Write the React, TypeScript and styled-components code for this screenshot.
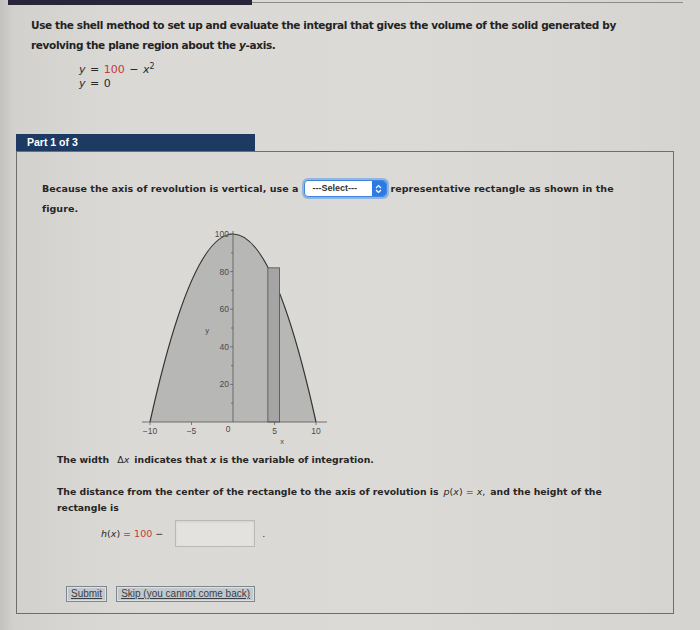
import React from "react";
import styled, { createGlobalStyle } from "styled-components";

const Global = createGlobalStyle`
  html, body { margin: 0; padding: 0; }
  body {
    width: 700px;
    height: 630px;
    overflow: hidden;
    background: #d8d6d2;
    font-family: "DejaVu Sans", Verdana, sans-serif;
  }
`;

const Page = styled.div`
  width: 700px;
  height: 630px;
  overflow: hidden;
  background: linear-gradient(90deg, #c4c2be 0px, #d3d1cd 14px, #dbd9d5 120px, #dcdad6 60%, #d6d4d0 100%);
`;

const TopRule = styled.div`
  display: flex;
  align-items: flex-start;
  height: 5px;
  padding-left: 8px;
`;

const TopTab = styled.div`
  width: 244px;
  height: 5px;
  background: #27253b;
`;

const TopLine = styled.div`
  width: 431px;
  margin-top: 2px;
  border-top: 1px solid #8d8b87;
`;

const Question = styled.div`
  margin: 10px 0 0 31px;
  font-size: 10.5px;
  font-weight: bold;
  line-height: 20px;
  letter-spacing: -0.37px;
  color: #232323;
  white-space: nowrap;
`;

const Equations = styled.div`
  margin: 8px 0 0 79px;
  font-size: 11px;
  line-height: 14px;
  color: #2a2a2a;
  word-spacing: 1px;
`;

const Var = styled.i`
  font-style: italic;
`;

const Sup = styled.sup`
  font-size: 8px;
  line-height: 0;
  vertical-align: 4px;
`;

const Red = styled.span`
  color: #c23b3b;
`;

const PartHeader = styled.div`
  margin: 43px 0 0 16px;
  width: 239px;
  height: 17px;
  box-sizing: border-box;
  padding-left: 11px;
  background: #1d3a62;
  color: #ffffff;
  font-family: "Liberation Sans", Arial, sans-serif;
  font-weight: bold;
  font-size: 10.5px;
  line-height: 17px;
`;

const Panel = styled.div`
  margin-left: 16px;
  width: 658px;
  height: 463px;
  box-sizing: border-box;
  border: 1px solid #6e6e6e;
  padding-top: 27px;
  color: #262626;
`;

const Sentence = styled.div`
  padding-left: 25px;
  font-size: 9.5px;
  font-weight: bold;
  letter-spacing: 0.05px;
  line-height: 20px;
  white-space: nowrap;
`;

const SelectBox = styled.span`
  display: inline-flex;
  align-items: stretch;
  vertical-align: middle;
  box-sizing: border-box;
  width: 83px;
  height: 17px;
  margin: -2px 4px 0 5px;
  border: 1px solid #3f86dc;
  border-radius: 4px;
  background: #ffffff;
  box-shadow: 0 0 0 2px rgba(86, 152, 232, 0.55);
  letter-spacing: 0;
`;

const SelectText = styled.span`
  flex: 1;
  padding-left: 8px;
  font-family: "Liberation Sans", Arial, sans-serif;
  font-weight: bold;
  font-size: 9px;
  line-height: 15px;
  color: #333333;
`;

const SelectArrow = styled.span`
  width: 14px;
  border-radius: 0 3px 3px 0;
  background: #2c7be5;
  display: flex;
  align-items: center;
  justify-content: center;
`;

const Figure = styled.div`
  margin: 7px 0 0 118px;
  width: 200px;
  height: 222px;
`;

const Para = styled.div<{ $top: number }>`
  margin-top: ${(p) => p.$top}px;
  padding-left: 40px;
  font-size: 9.3px;
  font-weight: bold;
  letter-spacing: 0;
  line-height: 16px;
  white-space: nowrap;
`;

const Math = styled.span`
  font-weight: normal;
  font-size: 9.5px;
  color: #2a2a2a;
  padding: 0 5px;
`;

const MathRow = styled.div`
  display: flex;
  align-items: center;
  margin-top: 4px;
  padding-left: 84px;
  height: 27px;
  font-size: 9.5px;
  color: #2a2a2a;
`;

const AnswerBox = styled.div`
  width: 80px;
  height: 27px;
  box-sizing: border-box;
  margin-left: 12px;
  border: 1px solid #b9b9b7;
  background: #e3e2df;
  box-shadow: inset 0 1px 2px rgba(0, 0, 0, 0.08);
`;

const Dot = styled.span`
  margin-left: 7px;
`;

const ButtonRow = styled.div`
  display: flex;
  gap: 9px;
  margin: 39px 0 0 49px;
`;

const Button = styled.button`
  height: 16px;
  padding: 0 4px;
  box-sizing: border-box;
  border: 1px solid #7e878e;
  background: #c3c8cc;
  box-shadow: inset 0 0 0 1px #dde1e4;
  font-family: "Liberation Sans", Arial, sans-serif;
  font-size: 10px;
  line-height: 14px;
  color: #3a3f44;
  text-decoration: underline;
  cursor: pointer;
`;

const ox = 98;
const oy = 196;
const ux = 8.3;
const uy = 1.88;
const X = (x: number) => ox + x * ux;
const Y = (y: number) => oy - y * uy;

function Chart() {
  const curve = `M ${X(-10)} ${Y(0)} Q ${X(0)} ${Y(200)} ${X(10)} ${Y(0)}`;
  const yLabels = [20, 40, 60, 80, 100];
  const xLabels: [number, string][] = [
    [-10, "\u221210"],
    [-5, "\u22125"],
    [5, "5"],
    [10, "10"],
  ];
  return (
    <svg width="200" height="222" viewBox="0 0 200 222">
      <path d={`${curve} Z`} fill="#b7b7b6" />
      <path d={curve} fill="none" stroke="#333" strokeWidth="1.2" />
      <rect
        x={X(4.2)}
        y={Y(82)}
        width={X(5.6) - X(4.2)}
        height={Y(0) - Y(82)}
        fill="#a5a5a5"
        stroke="#5a5a5a"
        strokeWidth="0.9"
      />
      <line x1="7" y1={oy} x2="192" y2={oy} stroke="#555" strokeWidth="0.8" />
      <line x1={ox} y1="5" x2={ox} y2={oy} stroke="#555" strokeWidth="0.8" />
      {[10, 20, 30, 40, 50, 60, 70, 80, 90, 100].map((v) => (
        <line
          key={v}
          x1={ox - (v % 20 === 0 ? 3 : 2)}
          y1={Y(v)}
          x2={ox}
          y2={Y(v)}
          stroke="#555"
          strokeWidth="0.7"
        />
      ))}
      {[-10, -5, 5, 10].map((v) => (
        <line key={v} x1={X(v)} y1={oy} x2={X(v)} y2={oy + 3} stroke="#555" strokeWidth="0.7" />
      ))}
      <g fontFamily="Liberation Sans, Arial, sans-serif" fontSize="8.5" fill="#4a4a4a">
        {yLabels.map((v) => (
          <text key={v} x={ox - 4} y={Y(v) + 3} textAnchor="end">
            {v}
          </text>
        ))}
        {xLabels.map(([v, s]) => (
          <text key={v} x={X(v)} y={oy + 12} textAnchor="middle">
            {s}
          </text>
        ))}
        <text x={ox - 5} y={oy + 10} textAnchor="middle">
          0
        </text>
        <text x="72" y="107" textAnchor="middle" fontSize="7.5">
          y
        </text>
        <text x="147" y="218" textAnchor="middle" fontSize="7.5">
          x
        </text>
      </g>
    </svg>
  );
}

function Chevrons() {
  return (
    <svg width="7" height="10" viewBox="0 0 7 10">
      <path d="M1 4 L3.5 1.5 L6 4 M1 6 L3.5 8.5 L6 6" fill="none" stroke="#fff" strokeWidth="1.2" />
    </svg>
  );
}

export default function App() {
  return (
    <>
      <Global />
      <Page>
        <TopRule>
          <TopTab />
          <TopLine />
        </TopRule>
        <Question>
          Use the shell method to set up and evaluate the integral that gives the volume of the solid generated by
          <br />
          revolving the plane region about the <Var>y</Var>-axis.
        </Question>
        <Equations>
          <div>
            <Var>y</Var> = <Red>100</Red> − <Var>x</Var>
            <Sup>2</Sup>
          </div>
          <div>
            <Var>y</Var> = 0
          </div>
        </Equations>
        <PartHeader>Part 1 of 3</PartHeader>
        <Panel>
          <Sentence>
            Because the axis of revolution is vertical, use a
            <SelectBox>
              <SelectText>---Select---</SelectText>
              <SelectArrow>
                <Chevrons />
              </SelectArrow>
            </SelectBox>
            representative rectangle as shown in the
            <br />
            figure.
          </Sentence>
          <Figure>
            <Chart />
          </Figure>
          <Para $top={4}>
            The width <Math>Δ<Var>x</Var></Math>indicates that <Var>x</Var> is the variable of integration.
          </Para>
          <Para $top={16}>
            The distance from the center of the rectangle to the axis of revolution is
            <Math>
              <Var>p</Var>(<Var>x</Var>) = <Var>x</Var>,
            </Math>
            and the height of the
            <br />
            rectangle is
          </Para>
          <MathRow>
            <span>
              <Var>h</Var>(<Var>x</Var>) = <Red>100</Red> −
            </span>
            <AnswerBox />
            <Dot>.</Dot>
          </MathRow>
          <ButtonRow>
            <Button type="button">Submit</Button>
            <Button type="button">Skip (you cannot come back)</Button>
          </ButtonRow>
        </Panel>
      </Page>
    </>
  );
}
